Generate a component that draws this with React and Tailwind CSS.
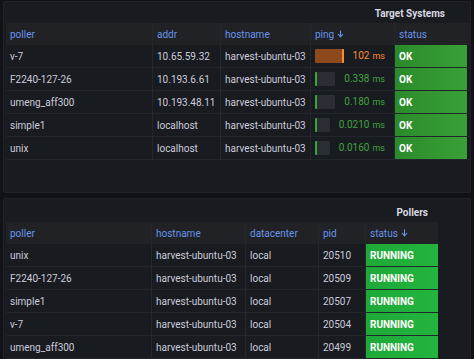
import React from 'react';

const targets = [
  { poller: 'v-7', addr: '10.65.59.32', host: 'harvest-ubuntu-03', ping: '102', warn: true },
  { poller: 'F2240-127-26', addr: '10.193.6.61', host: 'harvest-ubuntu-03', ping: '0.338' },
  { poller: 'umeng_aff300', addr: '10.193.48.11', host: 'harvest-ubuntu-03', ping: '0.180' },
  { poller: 'simple1', addr: 'localhost', host: 'harvest-ubuntu-03', ping: '0.0210' },
  { poller: 'unix', addr: 'localhost', host: 'harvest-ubuntu-03', ping: '0.0160' },
];

const pollers = [
  { poller: 'unix', host: 'harvest-ubuntu-03', dc: 'local', pid: '20510' },
  { poller: 'F2240-127-26', host: 'harvest-ubuntu-03', dc: 'local', pid: '20509' },
  { poller: 'simple1', host: 'harvest-ubuntu-03', dc: 'local', pid: '20507' },
  { poller: 'v-7', host: 'harvest-ubuntu-03', dc: 'local', pid: '20504' },
  { poller: 'umeng_aff300', host: 'harvest-ubuntu-03', dc: 'local', pid: '20499' },
];

const Arrow = () => (
  <svg width="7" height="8" viewBox="0 0 7 8" className="ml-[3px] inline-block">
    <path d="M3.5 0.5v6M1 4l2.5 2.8L6 4" stroke="currentColor" strokeWidth="1.1" fill="none" />
  </svg>
);

const Cell = ({ first, className = '', children }) => (
  <div className={`flex items-center whitespace-nowrap overflow-hidden px-[4px] ${first ? '' : 'border-l border-[#24272c]'} ${className}`}>
    {children}
  </div>
);

const PingBar = ({ value, warn }) => (
  <div className="flex items-center w-full gap-[9px] pr-[9px]">
    {warn ? (
      <div className="flex-1 h-[14px] bg-[#8e4a1d] border-r-2 border-[#ff8a2e] rounded-[1px]" />
    ) : (
      <div className="flex-1 h-[14px] bg-[#2a2d33] border-l-2 border-[#3aa53a] rounded-[1px]" />
    )}
    <span className={`whitespace-nowrap ${warn ? 'text-[#ff8a35]' : 'text-[#43a343]'}`}>
      {value}
      <span className="text-[9px] ml-[3px]">ms</span>
    </span>
  </div>
);

const Panel = ({ title, titleClass, className = '', children }) => (
  <div className={`mx-[3px] bg-[#181b1f] border border-[#202328] rounded-[2px] ${className}`}>
    <div className={`flex items-end justify-end ${titleClass} text-[10px] font-bold text-[#d8d9e0]`}>
      <span className="leading-none mb-[4px]">{title}</span>
    </div>
    <div className="pl-[2px]">{children}</div>
  </div>
);

export default function App() {
  const topCols = 'grid grid-cols-[146px_68px_90px_84px_73px]';
  const botCols = 'grid grid-cols-[145px_94px_73px_47px_73px]';
  return (
    <div className="w-[474px] h-[359px] overflow-hidden bg-[#111217] pt-[1px] text-[10px] text-[#ccccdc] font-['Roboto','Liberation_Sans',sans-serif]">
      <Panel title="Target Systems" titleClass="h-[21px] pr-[25px]" className="h-[192px]">
        <div className={`${topCols} h-[22px] bg-[#202226] text-[#6894ea]`}>
          <Cell first>poller</Cell>
          <Cell>addr</Cell>
          <Cell>hostname</Cell>
          <Cell>ping<Arrow /></Cell>
          <Cell>status</Cell>
        </div>
        {targets.map((t) => (
          <div key={t.poller} className={`${topCols} h-[23px] border-b border-[#22252a]`}>
            <Cell first>{t.poller}</Cell>
            <Cell>{t.addr}</Cell>
            <Cell>{t.host}</Cell>
            <Cell className="pr-0">
              <PingBar value={t.ping} warn={t.warn} />
            </Cell>
            <Cell className="bg-gradient-to-r from-[#2a8a2b] to-[#39a136] font-bold text-white">OK</Cell>
          </div>
        ))}
      </Panel>
      <Panel title="Pollers" titleClass="h-[23px] pr-[42px]" className="mt-[5px] h-[200px]">
        <div className={`${botCols} w-max h-[22px] bg-[#202226] text-[#6894ea]`}>
          <Cell first>poller</Cell>
          <Cell>hostname</Cell>
          <Cell>datacenter</Cell>
          <Cell>pid</Cell>
          <Cell>status<Arrow /></Cell>
        </div>
        {pollers.map((p) => (
          <div key={p.poller} className={`${botCols} w-max h-[23px] border-b border-[#22252a]`}>
            <Cell first>{p.poller}</Cell>
            <Cell>{p.host}</Cell>
            <Cell>{p.dc}</Cell>
            <Cell>{p.pid}</Cell>
            <Cell className="bg-gradient-to-r from-[#1ea838] to-[#23b53e] font-bold text-white">RUNNING</Cell>
          </div>
        ))}
      </Panel>
    </div>
  );
}
